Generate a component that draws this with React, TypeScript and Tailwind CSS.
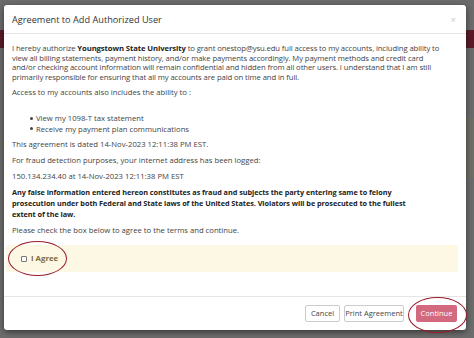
import React from "react";

export default function App() {
  const font = { fontFamily: '"Open Sans", "Noto Sans", sans-serif' };
  return (
    <div className="relative w-[474px] h-[338px] overflow-hidden bg-[#6c6c6c]" style={font}>
      {/* page behind the overlay */}
      <div className="absolute left-0 right-0 top-[30px] h-[18px] bg-[#5a1b27]" />
      <div className="absolute right-0 top-[118px] w-[8px] h-[60px] bg-[#6f6f66]" />

      <div className="relative pt-[5px] pl-[4px]">
        <div className="w-[462px] h-[325px] bg-white rounded-[3px] shadow-[0_2px_6px_rgba(0,0,0,0.5)] flex flex-col">
          {/* header */}
          <div className="h-[29px] shrink-0 border-b border-[#e5e5e5] flex items-center justify-between pl-[8px] pr-[10px]">
            <div className="text-[9.2px] text-[#333] leading-none pt-[2px]">Agreement to Add Authorized User</div>
            <div className="text-[9px] text-[#c8c8c8] leading-none">×</div>
          </div>

          {/* body */}
          <div className="flex-1 pt-[10px] pl-[8px] pr-[8px] text-[7.7px] text-[#444] leading-[9.5px] whitespace-nowrap">
            <p className="tracking-[-0.1px]">
              I hereby authorize <b className="text-[#222]">Youngstown State University</b> to grant onestop@ysu.edu full access to my accounts, including ability to
              <br />
              view all billing statements, payment history, and/or make payments accordingly. My payment methods and credit card
              <br />
              and/or checking account information will remain confidential and hidden from all other users. I understand that I am still
              <br />
              primarily responsible for ensuring that all my accounts are paid on time and in full.
            </p>
            <p className="mt-[6px]">Access to my accounts also includes the ability to :</p>
            <ul className="mt-[15.5px] pl-[18px] leading-[10.5px]">
              <li className="flex items-center gap-[3px]">
                <span className="w-[3px] h-[3px] rounded-full bg-[#444] inline-block" />
                View my 1098-T tax statement
              </li>
              <li className="flex items-center gap-[3px]">
                <span className="w-[3px] h-[3px] rounded-full bg-[#444] inline-block" />
                Receive my payment plan communications
              </li>
            </ul>
            <p className="mt-[5.75px]">This agreement is dated 14-Nov-2023 12:11:38 PM EST.</p>
            <p className="mt-[6.5px]">For fraud detection purposes, your internet address has been logged:</p>
            <p className="mt-[6.5px]">150.134.234.40 at 14-Nov-2023 12:11:38 PM EST</p>
            <p className="mt-[5.75px] font-bold text-[#222] leading-[11px] text-[7.3px] tracking-[-0.05px]">
              Any false information entered hereon constitutes as fraud and subjects the party entering same to felony
              <br />
              prosecution under both Federal and State laws of the United States. Violators will be prosecuted to the fullest
              <br />
              extent of the law.
            </p>
            <p className="mt-[5.75px]">Please check the box below to agree to the terms and continue.</p>

            <div className="mt-[10px] ml-[-6px] h-[27px] bg-[#fcf8e3] rounded-[2px] flex items-center pl-[15px]">
              <label className="flex items-center gap-[4px] text-[#7d6a3c] font-bold text-[7.8px] leading-none">
                <span className="w-[6px] h-[6px] border border-[#777] rounded-[1px] bg-white inline-block" />
                I Agree
              </label>
            </div>
          </div>

          {/* footer */}
          <div className="h-[34px] shrink-0 border-t border-[#e5e5e5] flex items-start justify-end pt-[8px] pr-[9px] text-[7.5px] leading-none">
            <button className="w-[35px] h-[17px] border border-[#ccc] rounded-[2px] bg-white text-[#444]">Cancel</button>
            <button className="ml-[4px] w-[60px] h-[17px] border border-[#ccc] rounded-[2px] bg-white text-[#444] whitespace-nowrap">Print Agreement</button>
            <button className="ml-[12px] w-[41px] h-[17px] rounded-[2px] bg-[#d2697e] text-white">Continue</button>
          </div>
        </div>
      </div>

      {/* annotation ellipses */}
      <div className="absolute left-[8px] top-[241px] w-[59px] h-[35px] rounded-[50%] border-[1.5px] border-[#9a1a2b]" />
      <div className="absolute left-[408px] top-[297px] w-[59px] h-[36px] rounded-[50%] border-[1.5px] border-[#9a1a2b]" />
    </div>
  );
}
